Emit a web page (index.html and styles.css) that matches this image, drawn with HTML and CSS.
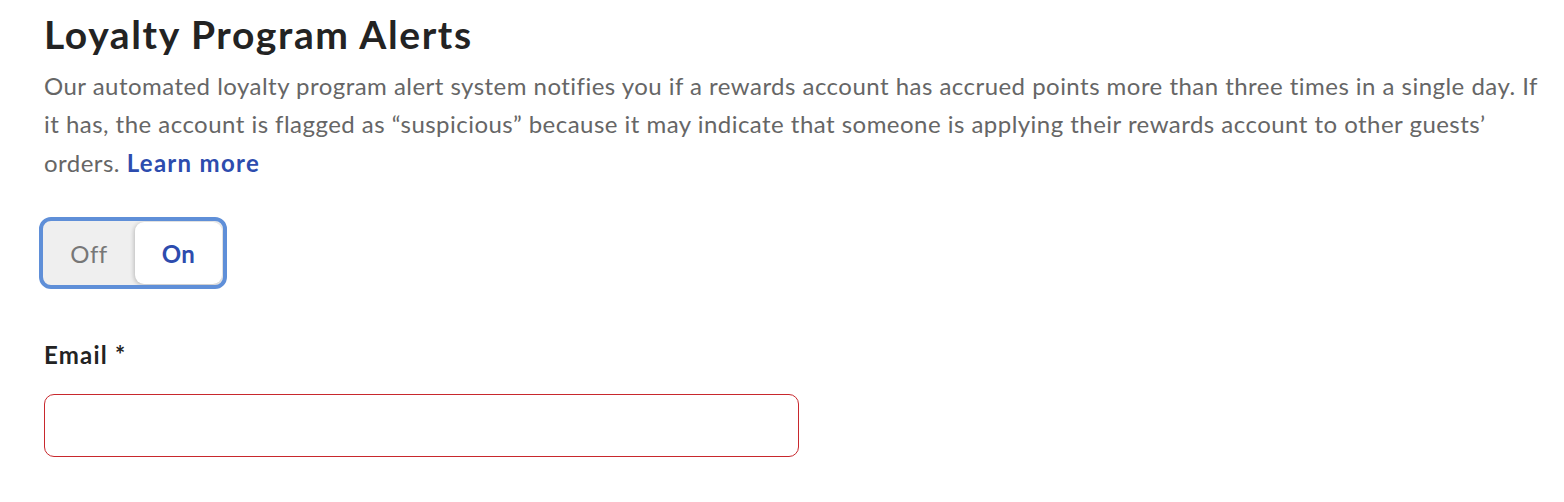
FILE: index.html
```html
<!DOCTYPE html>
<html lang="en">
<head>
<meta charset="utf-8">
<title>Loyalty Program Alerts</title>
<link rel="stylesheet" href="styles.css">
</head>
<body>
<main class="page">
  <section class="alerts">
    <h1 class="alerts-title">Loyalty Program Alerts</h1>
    <p class="alerts-desc">Our automated loyalty program alert system notifies you if a rewards account has accrued points more than three times in a single day. If it has, the account is flagged as “suspicious” because it may indicate that someone is applying their rewards account to other guests’ orders. <a class="learn-more" href="#">Learn more</a></p>
    <div class="toggle" role="group" aria-label="Loyalty program alerts">
      <button class="toggle-option" type="button">Off</button>
      <button class="toggle-option is-active" type="button">On</button>
    </div>
    <div class="field">
      <label class="field-label" for="email">Email *</label>
      <input class="field-input is-invalid" id="email" type="email">
    </div>
  </section>
</main>
</body>
</html>
```
FILE: styles.css
```css
* { box-sizing: border-box; }
html, body { margin: 0; padding: 0; background: #fff; }
body { font-family: Lato, "Open Sans", sans-serif; color: #252525; }
.page { padding: 11px 20px 0 44px; }
.alerts-title {
  margin: 0;
  font-family: Lato, sans-serif;
  font-weight: 700;
  font-size: 39px;
  line-height: 46px;
  letter-spacing: 1.6px;
  color: #232323;
}
.alerts-desc {
  margin: 10px 0 0;
  font-size: 24px;
  line-height: 38.4px;
  letter-spacing: 0.47px;
  color: #666;
}
.learn-more { color: #2d4cae; font-weight: 700; text-decoration: none; letter-spacing: 1.3px; }
.toggle {
  display: flex;
  width: fit-content;
  margin: 35px 0 0 -5px;
  border: 4px solid #5f8fd8;
  border-radius: 12px;
  background: #efefef;
  overflow: hidden;
}
.toggle-option {
  width: 92px;
  height: 64px;
  margin: 0;
  padding: 0;
  border: 0;
  background: transparent;
  font-family: Lato, sans-serif;
  font-size: 24px;
  letter-spacing: 0.5px;
  color: #777;
  cursor: pointer;
}
.toggle-option.is-active {
  width: 87px;
  height: 62px;
  margin: 1px 1px 1px 0;
  border-radius: 9px;
  background: #fff;
  color: #2d4cae;
  font-weight: 700;
  box-shadow: -1px 1px 4px rgba(0,0,0,0.22);
}
.field { margin-top: 51px; display: flex; flex-direction: column; }
.field-label {
  font-size: 24px;
  font-weight: 700;
  line-height: 30px;
  letter-spacing: 1.2px;
  color: #232323;
}
.field-input {
  margin-top: 24px;
  width: 755px;
  height: 63px;
  border: 1px solid #c8282d;
  border-radius: 10px;
  background: #fff;
}
```
